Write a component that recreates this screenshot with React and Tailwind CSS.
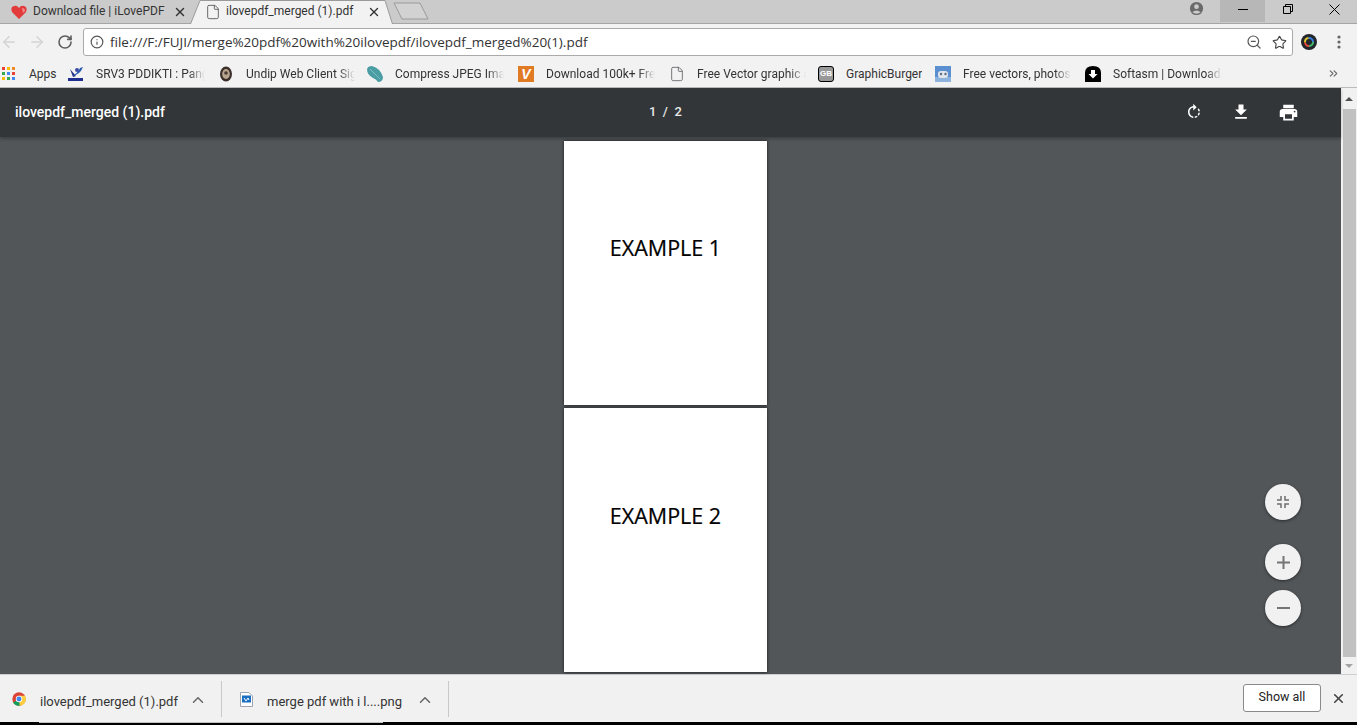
import { ArrowLeft, ArrowRight, RotateCw, Info, ZoomOut, Star, X, ChevronUp, ChevronsRight, File } from 'lucide-react';

const bookmarks = [
  { name: 'SRV3 PDDIKTI : Pangkalan', icon: 'srv', width: 'w-[150px]' },
  { name: 'Undip Web Client Sign', icon: 'undip', width: 'w-[149px]' },
  { name: 'Compress JPEG Images', icon: 'leaf', width: 'w-[151px]' },
  { name: 'Download 100k+ Free', icon: 'v', width: 'w-[151px]' },
  { name: 'Free Vector graphic art', icon: 'file', width: 'w-[149px]' },
  { name: 'GraphicBurger', icon: 'gb', width: 'w-[117px]' },
  { name: 'Free vectors, photos', icon: 'robot', width: 'w-[150px]' },
  { name: 'Softasm | Downloads', icon: 'soft', width: 'w-[150px]' },
];

function AppsIcon() {
  const colors = ['#ea4335', '#fbbc05', '#f08a24', '#34a853', '#4285f4', '#ea4335', '#fbbc05', '#34a853', '#4285f4'];
  return (
    <div className="grid grid-cols-3 gap-[2px] w-[13px] h-[13px] shrink-0">
      {colors.map((c, i) => (
        <span key={i} className="w-[3px] h-[3px]" style={{ backgroundColor: c }} />
      ))}
    </div>
  );
}

function BookmarkIcon({ type }) {
  if (type === 'srv') {
    return (
      <svg width="16" height="16" viewBox="0 0 16 16" className="shrink-0">
        <rect x="0" y="12" width="15" height="3" fill="#1f2f8f" />
        <path d="M2 3 L8 10 L5 11 Z" fill="#27348b" />
        <path d="M4 10 Q12 9 15 1 L12 2 Q10 7 4 10 Z" fill="#2a5db0" />
        <circle cx="9" cy="4" r="2" fill="#3b4ba3" />
      </svg>
    );
  }
  if (type === 'undip') {
    return (
      <svg width="16" height="16" viewBox="0 0 16 16" className="shrink-0">
        <ellipse cx="8" cy="8" rx="6" ry="7.5" fill="#3a2f2a" />
        <ellipse cx="8" cy="8" rx="3.8" ry="5" fill="#b9a58f" />
        <circle cx="8" cy="7" r="1.8" fill="#4a3a33" />
      </svg>
    );
  }
  if (type === 'leaf') {
    return (
      <svg width="16" height="16" viewBox="0 0 16 16" className="shrink-0">
        <path d="M0 3 Q1 0 5 0 Q13 2 16 11 Q16 16 11 16 Q9 13 6 12 Q0 9 0 3 Z" fill="#4a9da3" />
        <path d="M3 3 L13 13" stroke="#8cc8cb" strokeWidth="0.8" />
      </svg>
    );
  }
  if (type === 'v') {
    return (
      <div className="w-4 h-4 shrink-0 bg-[#e07b24] flex items-center justify-center text-white font-bold italic text-[14px] leading-none font-['Liberation_Sans',sans-serif]">
        V
      </div>
    );
  }
  if (type === 'file') {
    return <File size={16} strokeWidth={1.3} className="shrink-0 text-[#5f6368]" />;
  }
  if (type === 'gb') {
    return (
      <div className="w-4 h-4 shrink-0 rounded-[3px] border border-black bg-[#999] flex items-center justify-center text-white font-bold text-[8px] leading-none font-['Liberation_Sans',sans-serif]">
        GB
      </div>
    );
  }
  if (type === 'robot') {
    return (
      <svg width="16" height="16" viewBox="0 0 16 16" className="shrink-0">
        <rect width="16" height="16" fill="#5b8fd0" />
        <rect x="0" y="11" width="16" height="5" fill="#8eb2de" />
        <rect x="3" y="5" width="10" height="7" rx="3" fill="#e2e6ec" />
        <circle cx="6" cy="8" r="1.2" fill="#5b6b80" />
        <circle cx="10.5" cy="8" r="1.2" fill="#5b6b80" />
      </svg>
    );
  }
  return (
    <svg width="16" height="16" viewBox="0 0 16 16" className="shrink-0">
      <path d="M0 16 V7 Q0 0 8 0 Q16 0 16 7 V16 Z" fill="#000" />
      <path d="M6 4 H10 V8 H12.5 L8 12.5 L3.5 8 H6 Z" fill="#fff" />
    </svg>
  );
}

function Bookmark({ name, icon, width }) {
  const fade = icon === 'gb' ? '' : '[mask-image:linear-gradient(to_right,black_85%,transparent)]';
  return (
    <div className={`flex items-center gap-3 pl-3 shrink-0 ${width}`}>
      <BookmarkIcon type={icon} />
      <span className={`max-w-[109px] overflow-hidden whitespace-nowrap text-[12px] text-[#333] ${fade}`}>
        {name}
      </span>
    </div>
  );
}

function RoundButton({ children }) {
  return (
    <div className="w-9 h-9 rounded-full bg-[#f1f1f1] shadow-[0_1px_3px_rgba(0,0,0,0.5)] flex items-center justify-center text-[#757575]">
      {children}
    </div>
  );
}

function DownloadItem({ name, width, iconBox, icon }) {
  return (
    <div className={`flex items-center h-[36px] border-r border-[#c8c8c8] shrink-0 ${width}`}>
      <div className={`flex shrink-0 ${iconBox}`}>{icon}</div>
      <span className="text-[13px] text-[#333] whitespace-nowrap flex-1 translate-y-[3px]">{name}</span>
      <ChevronUp size={18} strokeWidth={2} className="text-[#666] mr-[14px] translate-y-[1px]" />
    </div>
  );
}

export default function App() {
  return (
    <div className="w-[1357px] h-[725px] overflow-hidden flex flex-col bg-black font-['Roboto','Open_Sans',sans-serif]">
      {/* tab strip */}
      <div className="h-[24px] shrink-0 bg-[#cbcbcb] flex items-stretch border-b border-[#a5a5a5]">
        <div className="w-[190px] shrink-0 flex items-center pl-[11px]">
          <svg width="16" height="14" viewBox="0 0 16 14" className="shrink-0">
            <path d="M8 14 L1 7 Q-1 2 3 1 Q6 0 8 3 Q10 0 13 1 Q17 2 15 7 Z" fill="#e23b3b" />
            <path d="M11 3 Q14 3 14 6 L12 8 Z" fill="#f08a8a" />
          </svg>
          <span className="ml-[6px] w-[140px] text-[12px] text-[#333] whitespace-nowrap overflow-hidden -translate-y-[1px]">Download file | iLovePDF</span>
          <X size={14} strokeWidth={2.4} className="text-[#333]" />
        </div>
        <div className="relative w-[203px] h-[24px] shrink-0 flex items-center pl-[15px]">
          <svg width="203" height="24" viewBox="0 0 203 24" className="absolute left-0 top-0">
            <path d="M0.5 24 L10 0.5 H195 L202.5 24" fill="#f2f2f2" stroke="#9a9a9a" />
          </svg>
          <File size={16} strokeWidth={1.3} className="relative text-[#555] shrink-0" />
          <span className="relative ml-[5px] w-[141px] text-[12px] text-[#333] whitespace-nowrap -translate-y-[1px]">ilovepdf_merged (1).pdf</span>
          <X size={14} strokeWidth={2.4} className="relative text-[#333]" />
        </div>
        <svg width="36" height="20" viewBox="0 0 36 20" className="mt-[2px] shrink-0">
          <path d="M1 1 H27 L35 17 H9 Z" fill="#d2d2d2" stroke="#9a9a9a" />
        </svg>
        <div className="flex-1" />
        <div className="flex items-center justify-center w-[24px] mr-[12px] -translate-y-[3px]">
          <svg width="15" height="15" viewBox="0 0 16 16">
            <circle cx="8" cy="8" r="7" fill="#6a6a6a" />
            <circle cx="8" cy="6" r="2.5" fill="#cbcbcb" />
            <path d="M3.5 12 Q8 8 12.5 12 Q8 15 3.5 12 Z" fill="#cbcbcb" />
          </svg>
        </div>
        <div className="w-[45px] h-[22px] bg-[#b7b7b7] flex items-center justify-center">
          <div className="w-[10px] h-[1px] bg-black -translate-y-[2px]" />
        </div>
        <div className="w-[46px] h-[22px] flex items-center justify-center">
          <svg width="10" height="10" viewBox="0 0 10 10" fill="none" stroke="#000" className="-translate-y-[2px]">
            <path d="M0.5 2.5 H7.5 V9.5 H0.5 Z M2.5 2.5 V0.5 H9.5 V7.5 H7.5" />
          </svg>
        </div>
        <div className="w-[46px] h-[22px] flex items-center justify-center">
          <svg width="11" height="11" viewBox="0 0 11 11" fill="none" stroke="#000" className="-translate-y-[2px]">
            <path d="M0.5 0.5 L10.5 10.5 M10.5 0.5 L0.5 10.5" />
          </svg>
        </div>
      </div>

      {/* address bar */}
      <div className="h-[36px] shrink-0 bg-[#f2f2f2] flex items-center">
        <ArrowLeft size={18} strokeWidth={2} className="text-[#d4d4d4]" />
        <ArrowRight size={18} strokeWidth={2} className="ml-[10px] text-[#d4d4d4]" />
        <RotateCw size={16} strokeWidth={2.4} className="ml-[11px] text-[#5e5e5e]" />
        <div className="ml-[10px] w-[1210px] h-[28px] bg-white border border-[#aaa] rounded-[3px] flex items-center pl-[6px] pr-[5px]">
          <Info size={14} strokeWidth={2} className="text-[#555] shrink-0" />
          <span className="ml-[6px] text-[13.5px] text-[#333] whitespace-nowrap flex-1 font-['Open_Sans',sans-serif]">file:///F:/FUJI/merge%20pdf%20with%20ilovepdf/ilovepdf_merged%20(1).pdf</span>
          <ZoomOut size={16} strokeWidth={1.8} className="text-[#555]" />
          <Star size={15} strokeWidth={1.8} className="ml-[10px] text-[#444]" />
        </div>
        <svg width="16" height="16" viewBox="0 0 16 16" className="ml-[8px] shrink-0">
          <circle cx="8" cy="8" r="8" fill="#23262b" />
          <circle cx="8" cy="8" r="4" fill="none" stroke="#3fbf6a" strokeWidth="2" strokeDasharray="6 19" />
          <circle cx="8" cy="8" r="4" fill="none" stroke="#e8483c" strokeWidth="2" strokeDasharray="6 19" strokeDashoffset="-6" />
          <circle cx="8" cy="8" r="4" fill="none" stroke="#e0c92f" strokeWidth="2" strokeDasharray="6 19" strokeDashoffset="-12" />
          <circle cx="8" cy="8" r="4" fill="none" stroke="#3a7de0" strokeWidth="2" strokeDasharray="7 18" strokeDashoffset="-18" />
        </svg>
        <svg width="4" height="14" viewBox="0 0 4 14" className="ml-[20px] shrink-0" fill="#666">
          <circle cx="2" cy="2" r="1.6" />
          <circle cx="2" cy="7" r="1.6" />
          <circle cx="2" cy="12" r="1.6" />
        </svg>
      </div>

      {/* bookmarks bar */}
      <div className="h-[28px] shrink-0 bg-[#f2f2f2] flex items-center border-b border-[#bbb]">
        <div className="flex items-center pl-[2px] w-[56px] shrink-0">
          <AppsIcon />
          <span className="ml-[14px] text-[12px] text-[#333]">Apps</span>
        </div>
        {bookmarks.map((b) => (
          <Bookmark key={b.name} name={b.name} icon={b.icon} width={b.width} />
        ))}
        <ChevronsRight size={13} strokeWidth={2} className="ml-auto mr-[17px] text-[#666]" />
      </div>

      {/* viewer */}
      <div className="flex-1 min-h-0 flex">
        <div className="w-[1341px] shrink-0 flex flex-col relative">
          <div className="h-[49px] shrink-0 bg-[#323639] flex items-center text-white shadow-[0_2px_3px_rgba(0,0,0,0.25)] relative z-10">
            <span className="pl-[15px] w-[649px] shrink-0 text-[14px] font-medium">ilovepdf_merged (1).pdf</span>
            <span className="text-[13px] w-[536px] shrink-0 font-medium text-[#e8e8e8] -translate-y-[1px]">1&nbsp;&nbsp;/&nbsp;&nbsp;2</span>
            <svg width="18" height="18" viewBox="0 0 24 24" fill="#fff" className="shrink-0 -translate-y-[1px]">
              <path d="M15.55 5.55L11 1v3.07C7.06 4.56 4 7.92 4 12s3.05 7.44 7 7.93v-2.02c-2.84-.48-5-2.94-5-5.91s2.16-5.43 5-5.91V10l4.55-4.45zM19.93 11c-.17-1.39-.72-2.73-1.62-3.89l-1.42 1.42c.54.75.88 1.6 1.02 2.47h2.02zM13 17.9v2.02c1.39-.17 2.74-.71 3.9-1.61l-1.44-1.44c-.75.54-1.59.89-2.46 1.03zm3.89-2.42l1.42 1.41c.9-1.16 1.45-2.5 1.62-3.89h-2.02c-.14.87-.48 1.72-1.02 2.48z" />
            </svg>
            <svg width="20" height="20" viewBox="0 0 24 24" fill="#fff" className="ml-[28px] shrink-0 -translate-y-[1px]">
              <path d="M19 9h-4V3H9v6H5l7 7 7-7zM5 18v2h14v-2H5z" />
            </svg>
            <svg width="21" height="21" viewBox="0 0 24 24" fill="#fff" className="ml-[27px] shrink-0">
              <path d="M19 8H5c-1.66 0-3 1.34-3 3v6h4v4h12v-4h4v-6c0-1.66-1.34-3-3-3zm-3 11H8v-5h8v5zm3-7c-.55 0-1-.45-1-1s.45-1 1-1 1 .45 1 1-.45 1-1 1zm-1-9H6v4h12V3z" />
            </svg>
          </div>
          <div className="flex-1 min-h-0 bg-[#525659] flex flex-col items-center gap-[3px] pt-[4px] pr-[10px]">
            <div className="w-[203px] h-[264px] shrink-0 bg-white shadow-[0_0_3px_rgba(0,0,0,0.7)] flex justify-center pt-[91px]">
              <span className="text-[21.5px] leading-[32px] text-black font-['Open_Sans',sans-serif] [-webkit-text-stroke:0.2px_black]">EXAMPLE 1</span>
            </div>
            <div className="w-[203px] h-[264px] shrink-0 bg-white shadow-[0_0_3px_rgba(0,0,0,0.7)] flex justify-center pt-[92px]">
              <span className="text-[21.5px] leading-[32px] text-black font-['Open_Sans',sans-serif] [-webkit-text-stroke:0.2px_black]">EXAMPLE 2</span>
            </div>
          </div>
          {/* zoom controls float over the page */}
          <div className="absolute right-[40px] top-[396px] flex flex-col">
            <RoundButton>
              <svg width="14" height="14" viewBox="0 0 14 14" fill="none" stroke="#6e6e6e" strokeWidth="1.5">
                <path d="M5 1 V5 H1 M9 1 V5 H13 M1 9 H5 V13 M13 9 H9 V13" />
              </svg>
            </RoundButton>
            <div className="mt-[24px]">
              <RoundButton>
                <svg width="13" height="13" viewBox="0 0 13 13" fill="none" stroke="#757575" strokeWidth="2">
                  <path d="M6.5 0 V13 M0 6.5 H13" />
                </svg>
              </RoundButton>
            </div>
            <div className="mt-[10px]">
              <RoundButton>
                <div className="w-[13px] h-[2px] bg-[#757575]" />
              </RoundButton>
            </div>
          </div>
        </div>
        {/* scrollbar */}
        <div className="w-[16px] shrink-0 bg-[#f1f1f1] flex flex-col items-center">
          <div className="h-[21px] shrink-0 flex items-center justify-center">
            <div className="w-0 h-0 border-x-[4px] border-x-transparent border-b-[4px] border-b-[#505050]" />
          </div>
          <div className="w-[13px] flex-1 bg-[#c1c1c1]" />
          <div className="h-[17px] shrink-0 flex items-center justify-center">
            <div className="w-0 h-0 border-x-[4px] border-x-transparent border-t-[4px] border-t-[#a3a3a3]" />
          </div>
        </div>
      </div>

      {/* download shelf */}
      <div className="h-[48px] shrink-0 bg-[#f1f1f1] border-t border-[#cfcfcf] flex items-center">
        <DownloadItem
          name="ilovepdf_merged (1).pdf"
          width="w-[222px]"
          iconBox="pl-[12px] w-[40px]"
          icon={
            <svg width="14" height="14" viewBox="0 0 48 48">
              <circle cx="24" cy="24" r="23" fill="#db4437" />
              <path d="M24 24 L4 36 A23 23 0 0 0 30 46 Z" fill="#0f9d58" />
              <path d="M24 13 H45 A23 23 0 0 1 26 47 Z" fill="#ffcd40" />
              <circle cx="24" cy="24" r="11" fill="#fff" />
              <circle cx="24" cy="24" r="8.5" fill="#4285f4" />
            </svg>
          }
        />
        <DownloadItem
          name="merge pdf with i l....png"
          width="w-[227px]"
          iconBox="pl-[18px] w-[45px] translate-y-[1px]"
          icon={
            <svg width="13" height="15" viewBox="0 0 13 15">
              <path d="M0.5 0.5 H9 L12.5 4 V14.5 H0.5 Z" fill="#fff" stroke="#9aa5b1" />
              <rect x="2" y="3.5" width="9" height="7" fill="#1b6fc2" />
              <path d="M4 6 L6 9 L8 6 L9 8" stroke="#fff" fill="none" />
            </svg>
          }
        />
        <div className="flex-1" />
        <div className="w-[78px] h-[28px] bg-white border border-[#8a8a8a] rounded-[3px] flex items-center justify-center text-[12.5px] text-[#222] -translate-y-[1px]">
          Show all
        </div>
        <X size={15} strokeWidth={2.6} className="ml-[10px] mr-[11px] text-[#444]" />
      </div>

      {/* bottom edge */}
      <div className="h-[3px] shrink-0 bg-black flex">
        <div className="ml-[39px] w-[344px] h-[1px] bg-[#c0c0c0]" />
      </div>
    </div>
  );
}
